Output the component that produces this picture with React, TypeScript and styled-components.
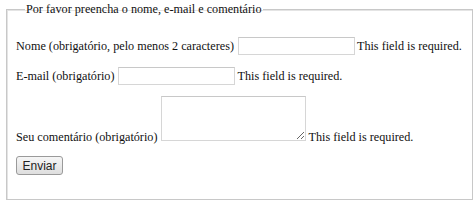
import React from 'react';
import styled, { createGlobalStyle } from 'styled-components';

const GlobalStyle = createGlobalStyle`
  html, body {
    margin: 0;
    padding: 0;
    background: #fff;
  }
  body {
    font-family: "Liberation Serif", "Times New Roman", serif;
    font-size: 12.2px;
    color: #111;
  }
`;

const Page = styled.div`
  padding: 2px 3px 0 6px;
  width: 465px;
`;

const Fieldset = styled.fieldset`
  margin: 0;
  padding: 0 10px 24px 9px;
  border: 1px solid #c8c8c8;
  box-shadow: inset 1px 1px 0 #e4e4e4;
  box-sizing: border-box;
`;

const Legend = styled.legend`
  padding: 0 1px;
  margin-left: 9px;
  line-height: 15px;
`;

const Row = styled.p<{ $top: number }>`
  margin: 0;
  line-height: 15px;
  white-space: nowrap;
  padding-top: ${(p) => p.$top}px;
`;

const Label = styled.label`
  margin-right: 4px;
`;

const TextInput = styled.input`
  width: 113px;
  height: 14px;
  padding: 1px;
  border: 1px solid #d6d6d6;
  border-top-color: #c8c8c8;
  font: inherit;
  vertical-align: baseline;
  margin: 0 2px 0 0;
`;

const TextArea = styled.textarea`
  width: 141px;
  height: 41px;
  padding: 1px;
  border: 1px solid #d6d6d6;
  border-top-color: #c8c8c8;
  font: inherit;
  margin: 0 2px 0 0;
  vertical-align: baseline;
  resize: both;
`;

const Error = styled.span`
  color: #111;
`;

const Button = styled.button`
  display: block;
  margin-top: 11px;
  width: 47px;
  height: 19px;
  padding: 0;
  font-family: "Liberation Sans", Arial, sans-serif;
  font-size: 12px;
  color: #222;
  border: 1px solid #9a9a9a;
  border-radius: 3px;
  background: linear-gradient(#f6f6f6, #dedede);
`;

export default function App() {
  return (
    <Page>
      <GlobalStyle />
      <form onSubmit={(e) => e.preventDefault()}>
        <Fieldset>
          <Legend>Por favor preencha o nome, e-mail e comentário</Legend>
          <Row $top={20}>
            <Label htmlFor="nome">Nome (obrigatório, pelo menos 2 caracteres)</Label>
            <TextInput id="nome" type="text" />
            <Error>This field is required.</Error>
          </Row>
          <Row $top={12}>
            <Label htmlFor="email">E-mail (obrigatório)</Label>
            <TextInput id="email" type="text" />
            <Error>This field is required.</Error>
          </Row>
          <Row $top={11}>
            <Label htmlFor="coment">Seu comentário (obrigatório)</Label>
            <TextArea id="coment" />
            <Error>This field is required.</Error>
          </Row>
          <Button type="submit">Enviar</Button>
        </Fieldset>
      </form>
    </Page>
  );
}
